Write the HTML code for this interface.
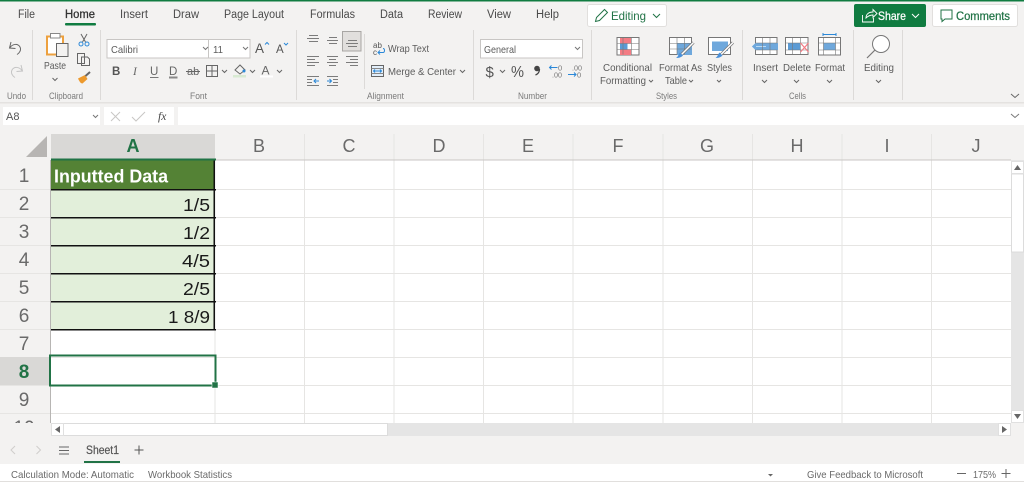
<!DOCTYPE html>
<html>
<head>
<meta charset="utf-8">
<style>
html,body{margin:0;padding:0;width:1024px;height:482px;overflow:hidden;background:#f3f2f1}
svg{display:block}
text{font-family:"Liberation Sans",sans-serif}
.t{font-size:11.500px;fill:#4a4a4a}
.s{font-size:10.500px;fill:#5c5c5c}
.g{font-size:9.500px;fill:#7a7a7a}
.r{font-size:19px;fill:#6a6a6a;text-anchor:middle}
.c{font-size:18px;fill:#6a6a6a;text-anchor:middle}
.d{font-size:17.500px;fill:#1a1a1a}
.st{font-size:10.500px;fill:#6a6a6a}
</style>
</head>
<body>
<svg width="1024" height="482" viewBox="0 0 1024 482" xmlns="http://www.w3.org/2000/svg">
<rect width="1024" height="482" fill="#f3f2f1"/>
<rect width="1024" height="1.500" fill="#107c41"/>

<!-- tabs -->
<text class="t" x="18" y="18" textLength="17" lengthAdjust="spacingAndGlyphs">File</text>
<text class="t" x="65" y="18" textLength="30" lengthAdjust="spacingAndGlyphs" style="fill:#333;stroke:#333;stroke-width:.3">Home</text>
<rect x="65" y="23" width="31" height="2.500" rx="1" fill="#107c41"/>
<text class="t" x="120" y="18" textLength="28" lengthAdjust="spacingAndGlyphs">Insert</text>
<text class="t" x="173" y="18" textLength="26" lengthAdjust="spacingAndGlyphs">Draw</text>
<text class="t" x="224" y="18" textLength="60" lengthAdjust="spacingAndGlyphs">Page Layout</text>
<text class="t" x="310" y="18" textLength="45" lengthAdjust="spacingAndGlyphs">Formulas</text>
<text class="t" x="380" y="18" textLength="23" lengthAdjust="spacingAndGlyphs">Data</text>
<text class="t" x="428" y="18" textLength="34" lengthAdjust="spacingAndGlyphs">Review</text>
<text class="t" x="487" y="18" textLength="24" lengthAdjust="spacingAndGlyphs">View</text>
<text class="t" x="536" y="18" textLength="23" lengthAdjust="spacingAndGlyphs">Help</text>

<!-- Editing button -->
<rect x="587.500" y="4.500" width="79" height="22" rx="2" fill="#fff" stroke="#e1dfdd"/>
<path d="M595.500 21.500l1-4 8-8 3 3-8 8z" fill="none" stroke="#217346" stroke-width="1"/>
<text x="611" y="20" textLength="35" lengthAdjust="spacingAndGlyphs" style="font-size:12px;fill:#217346">Editing</text>
<path d="M653 14l3.500 3.500 3.500-3.500" fill="none" stroke="#217346" stroke-width="1"/>
<!-- Share -->
<rect x="854" y="4" width="72" height="23" rx="2" fill="#107c41"/>
<path d="M862.500 15v7h11v-4M866 18c0-4 3-6 7-6v-2.500l4 4-4 4v-2.500c-3 0-5 1-7 3z" fill="none" stroke="#fff" stroke-width=".9"/>
<text x="878" y="20" textLength="28" lengthAdjust="spacingAndGlyphs" style="font-size:12px;fill:#fff;stroke:#fff;stroke-width:.25">Share</text>
<path d="M912 14l3.500 3.500 3.500-3.500" fill="none" stroke="#fff" stroke-width="1"/>
<!-- Comments -->
<rect x="932.500" y="4.500" width="85" height="22" rx="2" fill="#fff" stroke="#e1dfdd"/>
<path d="M941 10h11v9h-7l-3 2.500v-2.500h-1z" fill="none" stroke="#217346" stroke-width="1"/>
<text x="956" y="20" textLength="54" lengthAdjust="spacingAndGlyphs" style="font-size:12px;fill:#217346;stroke:#217346;stroke-width:.25">Comments</text>

<!-- separators -->
<g stroke="#dcdad8" stroke-width="1">
<path d="M32.500 30v70M100.500 30v70M296.500 30v70M364.500 34v55M473.500 30v70M591.500 30v70M742.500 30v70M853.500 30v70M902.500 30v70"/>
</g>
<!-- undo/redo -->
<path d="M11 42l-1.500 6 6 .5M10 47.500c3-4 8-4 10-.5 1.500 3-.5 6-3 7.500" fill="none" stroke="#666" stroke-width="1"/>
<path d="M21 65l1.500 6-6 .5M22 70.500c-3-4-8-4-10-.5-1.500 3 .5 6 3 7.500" fill="none" stroke="#c4c4c4" stroke-width="1"/>
<text class="g" x="7" y="99" textLength="19" lengthAdjust="spacingAndGlyphs">Undo</text>

<!-- clipboard -->
<path d="M47 36.500h16v18H47z" fill="#fff" stroke="#eda13f" stroke-width="2"/>
<rect x="50.500" y="33.500" width="9.500" height="4.500" fill="#fff" stroke="#888"/>
<rect x="56.500" y="43.500" width="11.500" height="13" fill="#f3f2f1" stroke="#666"/>
<text class="s" x="44" y="69" textLength="22" lengthAdjust="spacingAndGlyphs">Paste</text>
<path d="M52.500 78l2.500 2.500 2.500-2.500" fill="none" stroke="#666"/>
<path d="M81 34l4.500 8M87 34l-4.500 8" stroke="#666" fill="none"/>
<circle cx="81" cy="44" r="2" fill="none" stroke="#2b88d8"/><circle cx="87" cy="44" r="2" fill="none" stroke="#2b88d8"/>
<path d="M77.500 53.500h7v10h-7zM81.500 57h6l2 2v6.500h-8z" fill="#f3f2f1" stroke="#666"/>
<path d="M78 78.500l7-3.500 2.500 4-5 4.500c-2 0-3-2-4.500-5z" fill="#ed9a2d"/>
<path d="M85.500 76l4.500-4" stroke="#666" stroke-width="2"/>
<text class="g" x="49" y="99" textLength="34" lengthAdjust="spacingAndGlyphs">Clipboard</text>

<!-- font -->
<rect x="107" y="39.500" width="143" height="18.500" fill="#fff" stroke="#c8c6c4"/>
<path d="M208.500 40v18" stroke="#c8c6c4"/>
<text class="s" x="111" y="53" textLength="27" lengthAdjust="spacingAndGlyphs">Calibri</text>
<text class="s" x="213" y="53" textLength="10" lengthAdjust="spacingAndGlyphs">11</text>
<path d="M203 47l2.500 2.500 2.500-2.500M243 47l2.500 2.500 2.500-2.500" fill="none" stroke="#777"/>
<text x="255" y="53" style="font-size:13.500px;fill:#555">A</text>
<path d="M265 44.500l2-2 2 2" fill="none" stroke="#2b88d8"/>
<text x="276" y="53" style="font-size:11.500px;fill:#555">A</text>
<path d="M284 43l2 2 2-2" fill="none" stroke="#2b88d8"/>
<text x="112" y="75" style="font-size:11.500px;font-weight:bold;fill:#555">B</text>
<text x="133" y="75" style="font-size:11.500px;font-style:italic;fill:#666;font-family:'Liberation Serif',serif">I</text>
<text x="150" y="75" style="font-size:11.500px;fill:#666">U</text><path d="M150 77.500h8.500" stroke="#777"/>
<text x="169" y="75" style="font-size:11.500px;fill:#666">D</text><path d="M169 77.500h8.500" stroke="#888" stroke-width="2"/>
<text x="187" y="75" style="font-size:11px;fill:#666">ab</text><path d="M186 71.500h14" stroke="#666"/>
<path d="M206.500 65.500h11v11h-11zM212 65.500v11M206.500 71h11" fill="none" stroke="#666"/>
<path d="M222 70l2.500 2.500 2.500-2.500M250 70l2.500 2.500 2.500-2.500M277 70l2.500 2.500 2.500-2.500" fill="none" stroke="#666"/>
<path d="M235 70l5-5 5 5-5 4z" fill="none" stroke="#666"/><circle cx="244" cy="71" r="1.500" fill="#2b88d8"/>
<rect x="233" y="75" width="13" height="2.500" fill="#d8ead2"/>
<text x="261.500" y="74.500" style="font-size:12px;fill:#666">A</text>
<rect x="260" y="75.500" width="13" height="2" fill="#fff"/>
<text class="g" x="190" y="99" textLength="17" lengthAdjust="spacingAndGlyphs">Font</text>

<!-- alignment -->
<rect x="342.500" y="31.500" width="18.500" height="19.500" fill="#e1dfdd" stroke="#a8a6a4"/>
<g stroke="#7c7c7c" stroke-width="1" fill="none">
<path d="M309 35.500h9M307 38.500h12M309 41.500h9"/>
<path d="M329 37.500h8M327 40.500h11M329 43.500h8"/>
<path d="M348 40.500h9M346 43.500h12M348 46.500h9"/>
<path d="M307 56.500h12M307 59.500h8M307 62.500h12M307 65.500h8"/>
<path d="M327 56.500h11M329 59.500h7M327 62.500h11M329 65.500h7"/>
<path d="M346 56.500h12M350 59.500h8M346 62.500h12M350 65.500h8"/>
<path d="M307 76.500h12M307 85.500h12M307 79.500h5M307 82.500h5"/>
<path d="M327 76.500h11M327 85.500h11M333 79.500h5M333 82.500h5"/>
</g>
<path d="M314 81h5M316 79l-2 2 2 2M327 81h4M329.500 79l2 2-2 2" stroke="#2b88d8" fill="none"/>
<text x="373" y="48" style="font-size:8px;fill:#555">ab</text>
<text x="373" y="55" style="font-size:8px;fill:#555">c</text>
<path d="M378 52.500h5c2 0 2-4 0-4M380 50.500l-2 2 2 2" fill="none" stroke="#2b88d8"/>
<text class="s" x="388" y="52" textLength="41" lengthAdjust="spacingAndGlyphs">Wrap Text</text>
<rect x="371.500" y="65.500" width="12" height="11" fill="#e3effa" stroke="#666"/>
<path d="M371.500 68.500h12M371.500 73.500h12" stroke="#888" fill="none"/>
<path d="M373.500 71h8M375 69.500l-1.500 1.500 1.500 1.500M380 69.500l1.500 1.500-1.500 1.500" stroke="#2b88d8" fill="none"/>
<text class="s" x="388" y="75" textLength="68" lengthAdjust="spacingAndGlyphs">Merge &amp; Center</text>
<path d="M460 70l2.500 2.500 2.500-2.500" fill="none" stroke="#666"/>
<text class="g" x="367" y="99" textLength="37" lengthAdjust="spacingAndGlyphs">Alignment</text>

<!-- number -->
<rect x="480.500" y="39.500" width="102" height="18.500" fill="#fff" stroke="#c8c6c4"/>
<text class="s" x="484" y="53" textLength="32" lengthAdjust="spacingAndGlyphs">General</text>
<path d="M575 47l2.500 2.500 2.500-2.500" fill="none" stroke="#777"/>
<text x="485.500" y="77" style="font-size:15px;fill:#555">$</text>
<path d="M500 70l2.500 2.500 2.500-2.500" fill="none" stroke="#666"/>
<text x="511" y="77" textLength="13" lengthAdjust="spacingAndGlyphs" style="font-size:16px;fill:#555">%</text>
<circle cx="537" cy="68.500" r="2.800" fill="#444"/>
<path d="M539.500 69c0 3-1.500 5-4 6" fill="none" stroke="#444" stroke-width="1.300"/>
<text x="558" y="70.500" style="font-size:7.500px;fill:#777">0</text>
<text x="552" y="77.500" textLength="10" lengthAdjust="spacingAndGlyphs" style="font-size:7.500px;fill:#777">.00</text>
<path d="M557.500 67.500h-8M551.500 65.500l-2 2 2 2" stroke="#2b88d8" fill="none"/>
<text x="572" y="70.500" textLength="10" lengthAdjust="spacingAndGlyphs" style="font-size:7.500px;fill:#777">.00</text>
<text x="577" y="77.500" style="font-size:7.500px;fill:#777">0</text>
<path d="M568 74.500h8M574 72.500l2 2-2 2" stroke="#2b88d8" fill="none"/>
<text class="g" x="518" y="99" textLength="29" lengthAdjust="spacingAndGlyphs">Number</text>

<!-- conditional formatting -->
<g>
<rect x="617" y="37.500" width="22" height="17.500" fill="#fff" stroke="#777"/>
<rect x="620" y="38" width="11" height="5.500" fill="#f47c84"/>
<rect x="620" y="49.500" width="11" height="5.500" fill="#f47c84"/>
<rect x="620" y="43.500" width="7.500" height="6" fill="#5b9bd5"/>
<path d="M617 43.500h22M617 49.500h22M623 37.500v17M631.500 37.500v17" stroke="#777" fill="none" stroke-width=".6"/>
</g>
<text class="s" x="603" y="71" textLength="49" lengthAdjust="spacingAndGlyphs">Conditional</text>
<text class="s" x="600" y="84" textLength="46" lengthAdjust="spacingAndGlyphs">Formatting</text>
<path d="M649 80l2 2 2-2" fill="none" stroke="#666"/>
<!-- format as table -->
<rect x="669.500" y="37.500" width="22" height="17" fill="#fff" stroke="#777"/>
<rect x="677" y="43" width="15" height="12" fill="#6fa8dc"/>
<path d="M669.500 43.500h22M669.500 49h22M677 37.500v17M684.500 37.500v17" stroke="#777" fill="none" stroke-width=".6"/>
<path d="M693.500 42.500l-12 12" stroke="#777" stroke-width="3"/>
<path d="M693.500 42.500l-12 12" stroke="#fff" stroke-width="1.500"/>
<path d="M676 58c2-1 2.500-4 4-5.500l3 3c-2 2-4 2.500-7 2.500z" fill="#4a90d9"/>
<text class="s" x="659" y="71" textLength="43" lengthAdjust="spacingAndGlyphs">Format As</text>
<text class="s" x="665" y="84" textLength="22" lengthAdjust="spacingAndGlyphs">Table</text>
<path d="M689 80l2 2 2-2" fill="none" stroke="#666"/>
<!-- styles -->
<rect x="708.500" y="37.500" width="22" height="17" fill="#fff" stroke="#777"/>
<rect x="712" y="41.500" width="16" height="9.500" fill="#6fa8dc"/>
<path d="M733 42.500l-12 12" stroke="#777" stroke-width="3"/>
<path d="M733 42.500l-12 12" stroke="#fff" stroke-width="1.500"/>
<path d="M715.500 58c2-1 2.500-4 4-5.500l3 3c-2 2-4 2.500-7 2.500z" fill="#4a90d9"/>
<text class="s" x="707" y="71" textLength="25" lengthAdjust="spacingAndGlyphs">Styles</text>
<path d="M717 80l2 2 2-2" fill="none" stroke="#666"/>
<text class="g" x="656" y="99" textLength="21" lengthAdjust="spacingAndGlyphs">Styles</text>

<!-- cells -->
<g>
<rect x="755.500" y="37.500" width="21.500" height="17" fill="#fff" stroke="#777"/>
<rect x="756" y="43" width="22" height="7" fill="#6fa8dc"/>
<path d="M766 46.500h-13M756 43.500l-3.500 3 3.500 3" fill="none" stroke="#bcdcf5" stroke-width="1"/>
<path d="M752 46.500l4-4v8z" fill="#6fa8dc"/>
<path d="M762.500 37.500v17M770 37.500v17M755.500 43h21.500M755.500 50h21.500" stroke="#777" stroke-width=".6" fill="none"/>
<text class="s" x="753" y="71" textLength="25" lengthAdjust="spacingAndGlyphs">Insert</text>
<path d="M762 80l2.500 2.500 2.500-2.500" fill="none" stroke="#666"/>
<rect x="785.500" y="37.500" width="22.500" height="17" fill="#fff" stroke="#777"/>
<rect x="788" y="43" width="12" height="7" fill="#5b9bd5"/>
<path d="M792.500 37.500v17M800.500 37.500v17M785.500 43h22.500M785.500 50h22.500" stroke="#777" stroke-width=".6" fill="none"/>
<path d="M800.500 43l8 9M808.500 43l-8 9" stroke="#f47c84" stroke-width="1.200"/>
<text class="s" x="783" y="71" textLength="28" lengthAdjust="spacingAndGlyphs">Delete</text>
<path d="M794 80l2.500 2.500 2.500-2.500" fill="none" stroke="#666"/>
<rect x="818.500" y="37.500" width="22" height="17.500" fill="#fff" stroke="#777"/>
<rect x="823.500" y="43" width="12" height="7" fill="#6fa8dc"/>
<path d="M823.500 37.500v17M835.500 37.500v17M818.500 43h22M818.500 50h22" stroke="#777" stroke-width=".6" fill="none"/>
<path d="M823 34.500h13M823 33v3M836 33v3" stroke="#2b88d8" fill="none"/>
<text class="s" x="815" y="71" textLength="30" lengthAdjust="spacingAndGlyphs">Format</text>
<path d="M827 80l2.500 2.500 2.500-2.500" fill="none" stroke="#666"/>
<text class="g" x="789" y="99" textLength="17" lengthAdjust="spacingAndGlyphs">Cells</text>

<!-- editing search -->
<circle cx="881" cy="44" r="8.500" fill="#fff" stroke="#777"/>
<path d="M875 50l-8 8" stroke="#777" stroke-width="1.200"/>
<text class="s" x="864" y="71" textLength="30" lengthAdjust="spacingAndGlyphs">Editing</text>
<path d="M876 80l2.500 2.500 2.500-2.500" fill="none" stroke="#666"/>
<path d="M1011 94l4 3.500 4-3.500" fill="none" stroke="#666"/>

<!-- ribbon shadow -->
<rect x="0" y="102" width="1024" height="1.500" fill="#e4e2e0"/>

<!-- formula bar -->
<rect x="3" y="107" width="97" height="18" fill="#fff"/>
<rect x="104" y="107" width="70" height="18" fill="#fff"/>
<rect x="178" y="107" width="846" height="18" fill="#fff"/>
<text x="6" y="120" style="font-size:11px;fill:#555">A8</text>
<path d="M93 115l2.500 2.500 2.500-2.500" fill="none" stroke="#777"/>
<path d="M111 112l9 9M120 112l-9 9M132 117l4 4 9-9" fill="none" stroke="#c8c6c4"/>
<text x="158" y="120" style="font-size:11.500px;font-style:italic;fill:#444;font-family:'Liberation Serif',serif">fx</text>
<path d="M1011 114l4 3.500 4-3.500" fill="none" stroke="#777"/>

<!-- header area -->
<rect x="0" y="128" width="1024" height="308" fill="#f3f2f1"/>
<path d="M47 136v21H26z" fill="#b7b5b3"/>
<rect x="51" y="134" width="164" height="25" fill="#d9d8d6"/>

<!-- sheet -->
<rect x="51" y="160" width="960" height="263" fill="#fff"/>

<!-- grid lines -->
<g stroke="#e6e5e3" stroke-width="1">
<path d="M51 189.500h960M51 217.500h960M51 245.500h960M51 273.500h960M51 301.500h960M51 329.500h960M51 357.500h960M51 385.500h960M51 413.500h960"/>
<path d="M304.500 160v263M394 160v263M483.500 160v263M573 160v263M663 160v263M752.500 160v263M842 160v263M931.500 160v263M215 160v263"/>
<path d="M0 189.500h50M0 217.500h50M0 245.500h50M0 273.500h50M0 301.500h50M0 329.500h50M0 357.500h50M0 385.500h50M0 413.500h50"/>
<path d="M304.500 134v26M394 134v26M483.500 134v26M573 134v26M663 134v26M752.500 134v26M842 134v26M931.500 134v26"/>
</g>
<rect x="215" y="159.500" width="796" height="1" fill="#c8c6c4"/>
<rect x="50" y="160" width="1" height="263" fill="#b7b5b3"/>

<!-- column letters -->
<text class="c" x="133" y="152" style="font-weight:bold;fill:#217346">A</text>
<text class="c" x="259" y="152">B</text>
<text class="c" x="349" y="152">C</text>
<text class="c" x="439" y="152">D</text>
<text class="c" x="528" y="152">E</text>
<text class="c" x="618" y="152">F</text>
<text class="c" x="707" y="152">G</text>
<text class="c" x="797" y="152">H</text>
<text class="c" x="887" y="152">I</text>
<text class="c" x="976" y="152">J</text>

<!-- row numbers -->
<rect x="0" y="357" width="50" height="28" fill="#d9d8d6"/>
<text class="r" x="24" y="182">1</text>
<text class="r" x="24" y="210">2</text>
<text class="r" x="24" y="238">3</text>
<text class="r" x="24" y="266">4</text>
<text class="r" x="24" y="294">5</text>
<text class="r" x="24" y="322">6</text>
<text class="r" x="24" y="350">7</text>
<text class="r" x="24" y="378" style="font-weight:bold;fill:#217346">8</text>
<text class="r" x="24" y="406">9</text>
<clipPath id="c10"><rect x="0" y="414" width="50" height="9"/></clipPath>
<text class="r" x="24" y="434" clip-path="url(#c10)">10</text>

<!-- data cells -->
<rect x="51" y="160" width="163" height="29" fill="#548235"/>
<rect x="51" y="189" width="163" height="140" fill="#e2efda"/>
<g fill="#111">
<rect x="51" y="189" width="165" height="1.500"/>
<rect x="51" y="217" width="165" height="1.500"/>
<rect x="51" y="245" width="165" height="1.500"/>
<rect x="51" y="273" width="165" height="1.500"/>
<rect x="51" y="301" width="165" height="1.500"/>
<rect x="51" y="329" width="165" height="1.500"/>
<rect x="213.500" y="160" width="1.500" height="170"/>
</g>
<rect x="51" y="158.500" width="165" height="2" fill="#217346"/>
<text x="54" y="182.500" textLength="114" lengthAdjust="spacingAndGlyphs" style="font-size:18px;font-weight:bold;fill:#fff">Inputted Data</text>
<text class="d" x="183" y="211" textLength="27" lengthAdjust="spacingAndGlyphs">1/5</text>
<text class="d" x="183" y="239" textLength="27" lengthAdjust="spacingAndGlyphs">1/2</text>
<text class="d" x="182" y="267" textLength="28" lengthAdjust="spacingAndGlyphs">4/5</text>
<text class="d" x="183" y="295" textLength="27" lengthAdjust="spacingAndGlyphs">2/5</text>
<text class="d" x="168" y="323" textLength="42" lengthAdjust="spacingAndGlyphs">1 8/9</text>

<!-- selection -->
<rect x="50" y="355.500" width="165.500" height="30" fill="none" stroke="#217346" stroke-width="2"/>
<rect x="212" y="382" width="6" height="6" fill="#217346" stroke="#fff" stroke-width=".5"/>

<!-- vertical scrollbar -->
<rect x="1011" y="160" width="13" height="263" fill="#e5e5e5"/>
<rect x="1011.500" y="174" width="12" height="78" fill="#fff" stroke="#dcdcdc"/>
<rect x="1011.500" y="161.500" width="12" height="12" fill="#fff" stroke="#e0e0e0"/>
<path d="M1017.500 165l3.500 5h-7z" fill="#666"/>
<rect x="1011.500" y="410.500" width="12" height="12" fill="#fff" stroke="#e0e0e0"/>
<path d="M1017.500 419l3.500-5h-7z" fill="#666"/>

<!-- horizontal scrollbar -->
<rect x="51" y="423" width="960" height="13" fill="#e5e5e5"/>
<rect x="63.500" y="423.500" width="324" height="12" fill="#fff" stroke="#dcdcdc"/>
<rect x="51.500" y="423.500" width="12" height="12" fill="#fff" stroke="#e0e0e0"/>
<path d="M55 429.500l5-3.500v7z" fill="#666"/>
<rect x="998.500" y="423.500" width="12" height="12" fill="#fff" stroke="#e0e0e0"/>
<path d="M1007 429.500l-5-3.500v7z" fill="#666"/>

<!-- sheet tabs -->
<path d="M15 446l-4 4 4 4M36.500 446l4 4-4 4" fill="none" stroke="#d0cecc"/>
<path d="M59 447h10M59 450.500h10M59 454h10" stroke="#666"/>
<text x="86" y="454" textLength="33" lengthAdjust="spacingAndGlyphs" style="font-size:12px;fill:#555;stroke:#555;stroke-width:.2">Sheet1</text>
<rect x="84" y="461" width="36" height="2" fill="#217346"/>
<path d="M139 445.500v9M134.500 450h9" stroke="#555"/>

<!-- status bar -->
<rect x="0" y="464" width="1024" height="17" fill="#fff"/>
<rect x="0" y="481" width="1024" height="1" fill="#e1dfdd"/>
<text class="st" x="11" y="478" textLength="123" lengthAdjust="spacingAndGlyphs">Calculation Mode: Automatic</text>
<text class="st" x="148" y="478" textLength="84" lengthAdjust="spacingAndGlyphs">Workbook Statistics</text>
<path d="M768 474l2.500 2.500 2.500-2.500z" fill="#666"/>
<text class="st" x="807" y="478" textLength="116" lengthAdjust="spacingAndGlyphs">Give Feedback to Microsoft</text>
<path d="M957 473.500h9" stroke="#666"/>
<text class="st" x="973" y="478" textLength="23" lengthAdjust="spacingAndGlyphs">175%</text>
<path d="M1006 469v9M1001.500 473.500h9" stroke="#666"/>
</svg>
</body>
</html>
